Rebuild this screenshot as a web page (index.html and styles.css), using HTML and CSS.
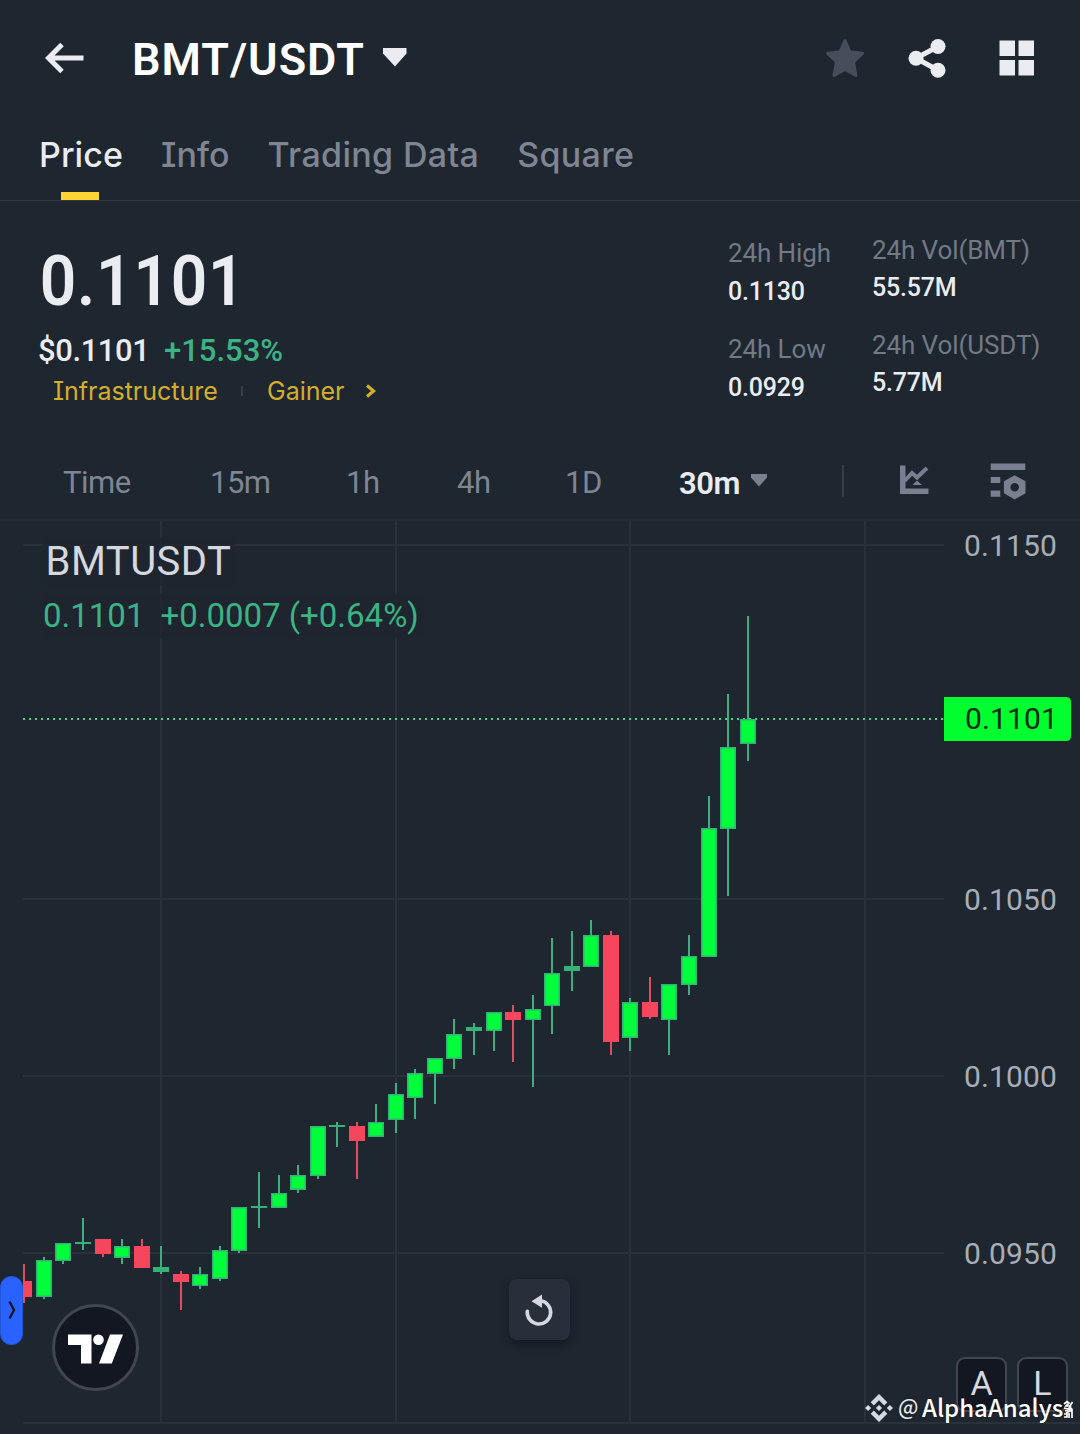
FILE: index.html
```html
<!DOCTYPE html>
<html lang="en">
<head>
<meta charset="utf-8">
<meta name="viewport" content="width=device-width, initial-scale=1">
<title>BMT/USDT</title>
<link rel="stylesheet" href="styles.css">
</head>
<body>
<div class="app">
  <header class="topbar">
    <svg class="icon-back" viewBox="0 0 40 32" width="40" height="32"><path d="M17 2.500 3.500 16 17 29.500M3.500 16H38.500" fill="none" stroke="currentColor" stroke-width="5"/></svg>
    <h1 class="pair">BMT/USDT</h1>
    <svg class="icon-caret" viewBox="0 0 24 20" width="24" height="20"><path d="M0 0H23.500V5.500L12 18.500 0 5.500Z" fill="currentColor"/></svg>
    <div class="actions">
      <svg class="icon-star" viewBox="0 0 38 40" width="38" height="40"><path d="M19 2.500 24 13.800 36.500 15.300 27.500 24 30 37.500 19 31.500 8 37.500 10.500 24 1.500 15.300 14 13.800Z" fill="currentColor" stroke="currentColor" stroke-width="3" stroke-linejoin="round"/></svg>
      <svg viewBox="0 0 38 40" width="38" height="40"><path d="M30 8.500 8 20.300 30 32.300" fill="none" stroke="currentColor" stroke-width="5"/><g fill="currentColor"><circle cx="8" cy="20.300" r="7.500"/><circle cx="30" cy="8.500" r="7.500"/><circle cx="30" cy="32.300" r="7.500"/></g></svg>
      <svg viewBox="0 0 36 36" width="36" height="36"><path d="M.5.500H16V16H.500ZM19.500.500H35V16H19.500ZM.5 20H16V35.500H.500ZM19.500 20H35V35.500H19.500Z" fill="currentColor"/></svg>
    </div>
  </header>

  <nav class="tabs">
    <a class="tab active">Price</a>
    <a class="tab">Info</a>
    <a class="tab wide">Trading Data</a>
    <a class="tab wide">Square</a>
  </nav>

  <section class="summary">
    <div class="quote">
      <div class="last">0.1101</div>
      <div class="change"><span class="fiat">$0.1101</span><span class="up">+15.53%</span></div>
      <div class="tags">
        <span class="tag-first">Infrastructure</span><i class="tag-sep"></i><span>Gainer</span>
        <svg class="tag-more" viewBox="0 0 12 16" width="12" height="16"><path d="M2 2.500 8.500 8 2 13.500" fill="none" stroke="currentColor" stroke-width="3.200"/></svg>
      </div>
    </div>
    <dl class="stats">
      <div><dt>24h High</dt><dd>0.1130</dd></div>
      <div><dt>24h Low</dt><dd>0.0929</dd></div>
    </dl>
    <dl class="stats volume">
      <div><dt>24h Vol(BMT)</dt><dd>55.57M</dd></div>
      <div><dt>24h Vol(USDT)</dt><dd>5.77M</dd></div>
    </dl>
  </section>

  <div class="intervals">
    <span>Time</span><span>15m</span><span>1h</span><span>4h</span><span>1D</span>
    <span class="current">30m <svg viewBox="0 0 18 14" width="18" height="14"><path d="M1 0H17V3.500L9 12.500 1 3.500Z" fill="currentColor"/></svg></span>
    <i class="divider"></i>
    <svg class="icon-indicator" viewBox="0 0 30 30" width="30" height="30"><path d="M0 .5H5.500V23.500H28.500V29H0Z" fill="currentColor"/><path d="M4.500 16 12 8 17 12.500 27 3" fill="none" stroke="currentColor" stroke-width="4"/><path d="M12.500 20 17 15.500 22 20Z" fill="currentColor"/></svg>
    <svg class="icon-settings" viewBox="0 0 36 38" width="36" height="38"><path d="M.7.500H35.300V7H.700ZM.7 14H10.300V20H.700ZM.7 27.500H10.300V33.700H.700Z" fill="currentColor"/><path fill-rule="evenodd" d="M24.700 12.300 35.500 18.300V30.300L24.700 36.500 13.900 30.300V18.300ZM24.700 20A4.300 4.300 0 1 0 24.700 28.600 4.300 4.300 0 1 0 24.700 20Z" fill="currentColor"/></svg>
  </div>

  <main class="chart">
    <svg class="plot" id="plot" viewBox="0 521 1080 913" width="1080" height="913">
      <g class="grid">
        <path d="M161 521V1422M396 521V1422M630 521V1422M865 521V1422"/>
        <path d="M23 545H944M23 899H944M23 1076H944M23 1253H944M23 1423H1080"/>
      </g>
      <path class="last-line" d="M23 719H944"/>
      <g id="candles"></g>
      <g class="axis">
        <text x="964" y="556">0.1150</text>
        <text x="964" y="910">0.1050</text>
        <text x="964" y="1087">0.1000</text>
        <text x="964" y="1264">0.0950</text>
      </g>
      <path class="last-tag" d="M944 697H1066Q1071 697 1071 702V736Q1071 741 1066 741H944Z"/>
      <text class="last-text" x="965" y="729">0.1101</text>
    </svg>

    <div class="legend">
      <div class="legend-name">BMTUSDT</div>
      <div class="legend-values"><span>0.1101</span><span>+0.0007 (+0.64%)</span></div>
    </div>

    <div class="handle"><svg viewBox="0 0 10 20" width="10" height="20"><path d="M2.500 1.500 7 10 2.500 18.500" fill="none" stroke="currentColor" stroke-width="2.400"/></svg></div>
    <div class="tv-logo"><svg viewBox="0 0 56 30" width="56" height="30"><path d="M0 .5H23.500V29.500H13V11H0ZM42 .5H55L43.800 29.500H31Z" fill="currentColor"/><circle cx="30.500" cy="5.800" r="5.300" fill="currentColor"/></svg></div>
    <button class="reset" aria-label="Reset chart"><svg viewBox="0 0 32 34" width="32" height="34"><path d="M4.300 17.300A11.700 11.700 0 1 0 18 6.800" fill="none" stroke="currentColor" stroke-width="3.600" stroke-linecap="round"/><path d="M8.500 7.200 19 .5V13.700Z" fill="currentColor"/></svg></button>
    <div class="scale-modes"><span>A</span><span>L</span></div>

    <div class="watermark">
      <svg viewBox="0 0 28 28" width="28" height="28"><path fill="currentColor" d="M14 0 22.300 8.300 19.200 11.400 14 6.200 8.800 11.400 5.700 8.300ZM3.100 10.900 6.200 14 3.100 17.100 0 14ZM14 10.900 17.100 14 14 17.100 10.900 14ZM24.900 10.900 28 14 24.900 17.100 21.800 14ZM14 28 5.700 19.700 8.800 16.600 14 21.800 19.200 16.600 22.300 19.700Z"/></svg>
      <span class="at">@</span><span class="author">AlphaAnalys</span>
      <svg class="glyph-tail" viewBox="0 0 11 19" width="11" height="19"><path fill="none" stroke="currentColor" stroke-width="1.700" d="M1 4 4 1.500 6 3 3 6 7 6 9.500 2M1 8 5 9 8 6M2 11 6 9.500 9 8M3 13 9 10V18M1 17H4V14H1M6 18 6 13"/></svg>
    </div>
  </main>
</div>
<script src="chart.js"></script>
</body>
</html>
```
FILE: styles.css
```css
* { box-sizing: border-box; margin: 0; padding: 0; }

body {
  width: 1080px;
  background: #1e262f;
  color: #eaecf2;
  font-family: Roboto, "Liberation Sans", sans-serif;
}

svg { display: block; flex: none; }

.app { display: flex; flex-direction: column; height: 1434px; overflow: hidden; }

/* header */
.topbar { display: flex; align-items: center; height: 115px; padding: 0 45px; }
.pair {
  width: 230px;
  margin-left: 47px;
  padding-top: 4px;
  font: 600 45px/52px Roboto, sans-serif;
  letter-spacing: 1px;
  white-space: nowrap;
  color: #fff;
}
.icon-caret { margin-left: 21px; }
.actions { display: flex; align-items: center; margin-left: auto; }
.actions svg + svg { margin-left: 44px; }
.actions svg:last-child { margin-left: 53px; }
.icon-star { color: #474d5b; }

.tabs {
  display: flex;
  gap: 38px;
  height: 86px;
  padding: 20px 0 0 39px;
  border-bottom: 1px solid #333a45;
}
.tab {
  display: flex;
  flex-direction: column;
  justify-content: space-between;
  align-items: center;
  font: 500 34px/40px Inter, sans-serif;
  font-feature-settings: "cv08" 1;
  color: #7f8593;
}
.tab.wide { letter-spacing: 0.34px; }
.tab.active { color: #eaecf2; letter-spacing: 0.1px; }
.tab.active::after { content: ""; width: 38px; height: 8px; margin-right: 2px; background: #fcd535; }

/* price summary */
.summary { display: flex; height: 239px; padding-left: 38px; }
.quote { width: 690px; padding-top: 38px; }
.last {
  padding-left: 2px;
  font-size: 71px;
  font-weight: 600;
  line-height: 84px;
  letter-spacing: 0.9px;
  transform: scaleX(0.9);
  transform-origin: 0 50%;
}
.change {
  display: flex;
  margin-top: 10px;
  font-size: 31px;
  font-weight: 500;
  line-height: 36px;
}
.fiat { width: 126px; letter-spacing: -0.4px; }
.up { color: #3cb384; }
.tags {
  display: flex;
  align-items: center;
  margin: 7px 0 0 15px;
  font: 400 25px/30px Inter, sans-serif;
  font-feature-settings: "cv08" 1;
  color: #d5ae2c;
}
.tag-first { width: 188px; letter-spacing: 0; }
.tag-sep { width: 2px; height: 10px; background: #3a4049; margin-right: 24px; }
.tag-more { margin-left: 20px; }

.stats {
  display: flex;
  flex-direction: column;
  gap: 25px;
  width: 144px;
  padding-top: 36px;
  white-space: nowrap;
}
.stats.volume { padding-top: 33px; }
.stats dt { font-size: 26px; line-height: 32px; letter-spacing: -0.1px; color: #737985; }
.stats dd { margin-top: 7px; font-size: 25px; font-weight: 500; line-height: 32px; letter-spacing: -0.2px; }
.stats.volume dd { margin-top: 6px; }

/* interval picker */
.intervals {
  display: grid;
  grid-template-columns: 147px 136px 111px 108px 114px 163px 57px 90px 36px;
  align-items: center;
  height: 81px;
  padding-left: 63px;
  padding-top: 7px;
  border-bottom: 2px solid #262d37;
  font-size: 31px;
  line-height: 40px;
  letter-spacing: -0.5px;
  color: #7f8593;
}
.current { display: flex; align-items: center; gap: 10px; font-weight: 600; color: #eaecf2; padding-top: 2px; }
.current svg { color: #7a8090; margin-top: -6px; }
.divider { width: 2px; height: 32px; background: #363d48; margin-top: -5px; }
.intervals > svg { color: #7a8090; margin: -3px 0 0 1px; }
.intervals > .icon-indicator { margin-top: -6px; }

/* chart */
.chart { position: relative; flex: 1; }
.grid path { fill: none; stroke: #29313a; stroke-width: 2; }
.last-line { stroke: #4fd389; stroke-width: 2; stroke-dasharray: 2 4; }
.wick-up { stroke: #41ac80; stroke-width: 2; }
.wick-down { stroke: #e04c60; stroke-width: 2; }
.body-up-edge { fill: #35b278; }
.body-up { fill: #00ff3a; }
.body-down { fill: #f6465d; }
.axis { fill: #a9adb7; font-size: 30px; letter-spacing: 0.13px; }
.last-tag { fill: #00ff2f; }
.last-text { fill: #0c2a16; font-size: 30px; letter-spacing: 0.13px; }

.legend { position: absolute; left: 43px; top: 17px; }
.legend-name {
  width: max-content;
  padding: 0 4px 0 2.500px;
  background: rgba(30, 38, 47, 0.8);
  font-size: 40px;
  line-height: 48px;
  letter-spacing: 0.5px;
  color: #d5d8df;
}
.legend-values {
  display: flex;
  gap: 16px;
  width: max-content;
  margin-top: 8px;
  padding: 0 4px 0 0;
  background: rgba(30, 38, 47, 0.8);
  font-size: 33px;
  line-height: 44px;
  color: #3cb384;
}

.handle {
  position: absolute;
  left: 0;
  top: 755px;
  display: flex;
  align-items: center;
  justify-content: center;
  width: 23px;
  height: 69px;
  padding: 0 0 1px 0;
  border: 1px solid #2355d8;
  border-radius: 11px;
  background: #2962ff;
  color: #131722;
}

.tv-logo {
  position: absolute;
  left: 52px;
  top: 783px;
  display: flex;
  align-items: center;
  justify-content: center;
  width: 87px;
  height: 87px;
  padding: 2px 0 0 1px;
  border: 3px solid #434651;
  border-radius: 50%;
  background: #131722;
  color: #fff;
}

.reset {
  position: absolute;
  left: 509px;
  top: 758px;
  display: flex;
  align-items: center;
  justify-content: center;
  width: 61px;
  height: 61px;
  padding: 2px 2px 0 0;
  border: 0;
  border-radius: 8px;
  background: #282f3a;
  box-shadow: 0 4px 8px rgba(10, 14, 22, 0.45);
  color: #d5d8df;
}

.scale-modes { position: absolute; left: 956px; top: 836px; display: flex; gap: 10px; }
.scale-modes span {
  width: 51px;
  height: 55px;
  border: 2px solid #434651;
  border-radius: 9px;
  background: #131722;
  color: #d5d8df;
  font-size: 34px;
  line-height: 48px;
  text-align: center;
}

.watermark {
  position: absolute;
  left: 865px;
  top: 872px;
  display: flex;
  align-items: center;
  height: 30px;
  font: 500 24px/28px "Noto Sans CJK SC", sans-serif;
  color: #fff;
  text-shadow: 0 0 2px rgba(0, 0, 0, 0.5);
}
.watermark svg:first-child { color: #d5d8df; }
.at { width: 24px; margin: -5px 0 0 5px; font-size: 21px; color: #e4e6eb; }
.author { margin-top: -2px; }
.glyph-tail { margin-top: 2px; }
```
FILE: chart.js
```js
// [centre x, high, body top, body bottom, low, rising]
const candles = [
  [24, 1264, 1281, 1297, 1303, 0], [44, 1257, 1260, 1297, 1299, 1],
  [63, 1243, 1243, 1261, 1264, 1], [83, 1218, 1242, 1244, 1250, 1],
  [103, 1239, 1239, 1254, 1257, 0], [122, 1239, 1246, 1258, 1264, 1],
  [142, 1239, 1246, 1268, 1268, 0], [161, 1246, 1267, 1272, 1274, 1],
  [181, 1271, 1274, 1282, 1310, 0], [200, 1267, 1274, 1286, 1289, 1],
  [220, 1246, 1250, 1279, 1281, 1], [239, 1207, 1207, 1251, 1253, 1],
  [259, 1172, 1206, 1208, 1228, 1], [279, 1175, 1193, 1208, 1208, 1],
  [298, 1165, 1175, 1190, 1193, 1], [318, 1126, 1126, 1176, 1179, 1],
  [337, 1122, 1125, 1127, 1147, 1], [357, 1122, 1126, 1141, 1179, 0],
  [376, 1104, 1122, 1137, 1137, 1], [396, 1083, 1094, 1120, 1133, 1],
  [415, 1069, 1073, 1098, 1119, 1], [435, 1058, 1058, 1074, 1104, 1],
  [454, 1019, 1034, 1059, 1069, 1], [474, 1023, 1027, 1031, 1055, 1],
  [494, 1012, 1012, 1031, 1051, 1], [513, 1005, 1012, 1020, 1062, 0],
  [533, 995, 1009, 1020, 1087, 1], [552, 938, 973, 1006, 1034, 1],
  [572, 931, 966, 971, 991, 1], [591, 920, 935, 967, 967, 1],
  [611, 931, 935, 1042, 1055, 0], [630, 998, 1002, 1038, 1051, 1],
  [650, 977, 1002, 1017, 1019, 0], [669, 984, 984, 1020, 1055, 1],
  [689, 935, 956, 985, 995, 1], [709, 796, 828, 957, 957, 1],
  [728, 694, 747, 829, 896, 1], [748, 616, 719, 744, 761, 1]
];

const PLOT_LEFT = 23;
const layer = document.getElementById('candles');

function add(name, cls, attrs) {
  const el = document.createElementNS('http://www.w3.org/2000/svg', name);
  el.setAttribute('class', cls);
  for (const key in attrs) el.setAttribute(key, attrs[key]);
  layer.appendChild(el);
}

for (const [x, high, top, bottom, low, rising] of candles) {
  const left = Math.max(x - 8, PLOT_LEFT);
  const right = x + 8;
  add('path', rising ? 'wick-up' : 'wick-down', { d: `M${x} ${high}V${low}` });
  add('rect', rising ? 'body-up-edge' : 'body-down', { x: left, y: top, width: right - left, height: bottom - top });
  if (rising && bottom - top > 6) {
    add('rect', 'body-up', { x: left + 1.5, y: top + 1.5, width: right - left - 3, height: bottom - top - 3 });
  }
}
```
